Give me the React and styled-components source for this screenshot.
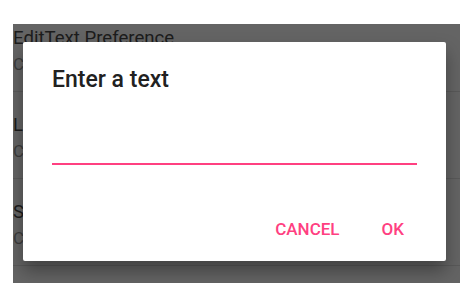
import React from "react";
import styled, { createGlobalStyle } from "styled-components";

const GlobalStyle = createGlobalStyle`
    html, body {
        margin: 0;
        padding: 0;
        background: #ffffff;
        font-family: Roboto, "Noto Sans", sans-serif;
    }
`;

const Page = styled.div`
    width: 474px;
    height: 295px;
    padding: 24px 0 0 13px;
    box-sizing: border-box;
`;

const Screen = styled.div`
    position: relative;
    width: 447px;
    height: 259px;
    background: #646464;
    overflow: hidden;
`;

const PrefList = styled.div`
    display: flex;
    flex-direction: column;
    margin-top: -19px;
`;

const PrefRow = styled.div`
    height: 87px;
    box-sizing: border-box;
    padding-top: 22px;
    border-bottom: 1px solid #595959;
    display: flex;
    flex-direction: column;
    gap: 4px;
`;

const PrefTitle = styled.div`
    font-size: 18.6px;
    line-height: 23px;
    color: #1c1c1c;
    white-space: nowrap;
`;

const PrefSummary = styled.div`
    font-size: 17px;
    line-height: 20px;
    color: #3c3c3c;
`;

const Dialog = styled.div`
    position: absolute;
    left: 10px;
    top: 18px;
    width: 423px;
    height: 219px;
    background: #ffffff;
    border-radius: 2px;
    box-shadow: 0 10px 18px rgba(0, 0, 0, 0.35);
    box-sizing: border-box;
    padding: 24px 29px 0 29px;
    display: flex;
    flex-direction: column;
`;

const DialogTitle = styled.h2`
    margin: 0;
    font-size: 23px;
    font-weight: 500;
    line-height: 28px;
    color: #212121;
`;

const TextInput = styled.input`
    margin-top: 41px;
    height: 28px;
    border: none;
    border-bottom: 2px solid #ff4081;
    outline: none;
    padding: 0;
    font-family: inherit;
    font-size: 18px;
    background: transparent;
`;

const Actions = styled.div`
    display: flex;
    justify-content: flex-end;
    gap: 16px;
    margin-top: 50px;
    margin-right: 0;
`;

const ActionButton = styled.button`
    border: none;
    background: transparent;
    padding: 4px 13px;
    font-family: inherit;
    font-size: 17px;
    font-weight: 500;
    color: #ff4081;
    cursor: pointer;
`;

const prefs = ["EditText Preference", "List Preference", "Switch Preference"];

const App = () => {
    return (
        <>
            <GlobalStyle />
            <Page>
                <Screen>
                    <PrefList>
                        {prefs.map((p) => (
                            <PrefRow key={p}>
                                <PrefTitle>{p}</PrefTitle>
                                <PrefSummary>Click to change</PrefSummary>
                            </PrefRow>
                        ))}
                    </PrefList>
                    <Dialog>
                        <DialogTitle>Enter a text</DialogTitle>
                        <TextInput defaultValue="" />
                        <Actions>
                            <ActionButton>CANCEL</ActionButton>
                            <ActionButton>OK</ActionButton>
                        </Actions>
                    </Dialog>
                </Screen>
            </Page>
        </>
    );
};

export default App;
